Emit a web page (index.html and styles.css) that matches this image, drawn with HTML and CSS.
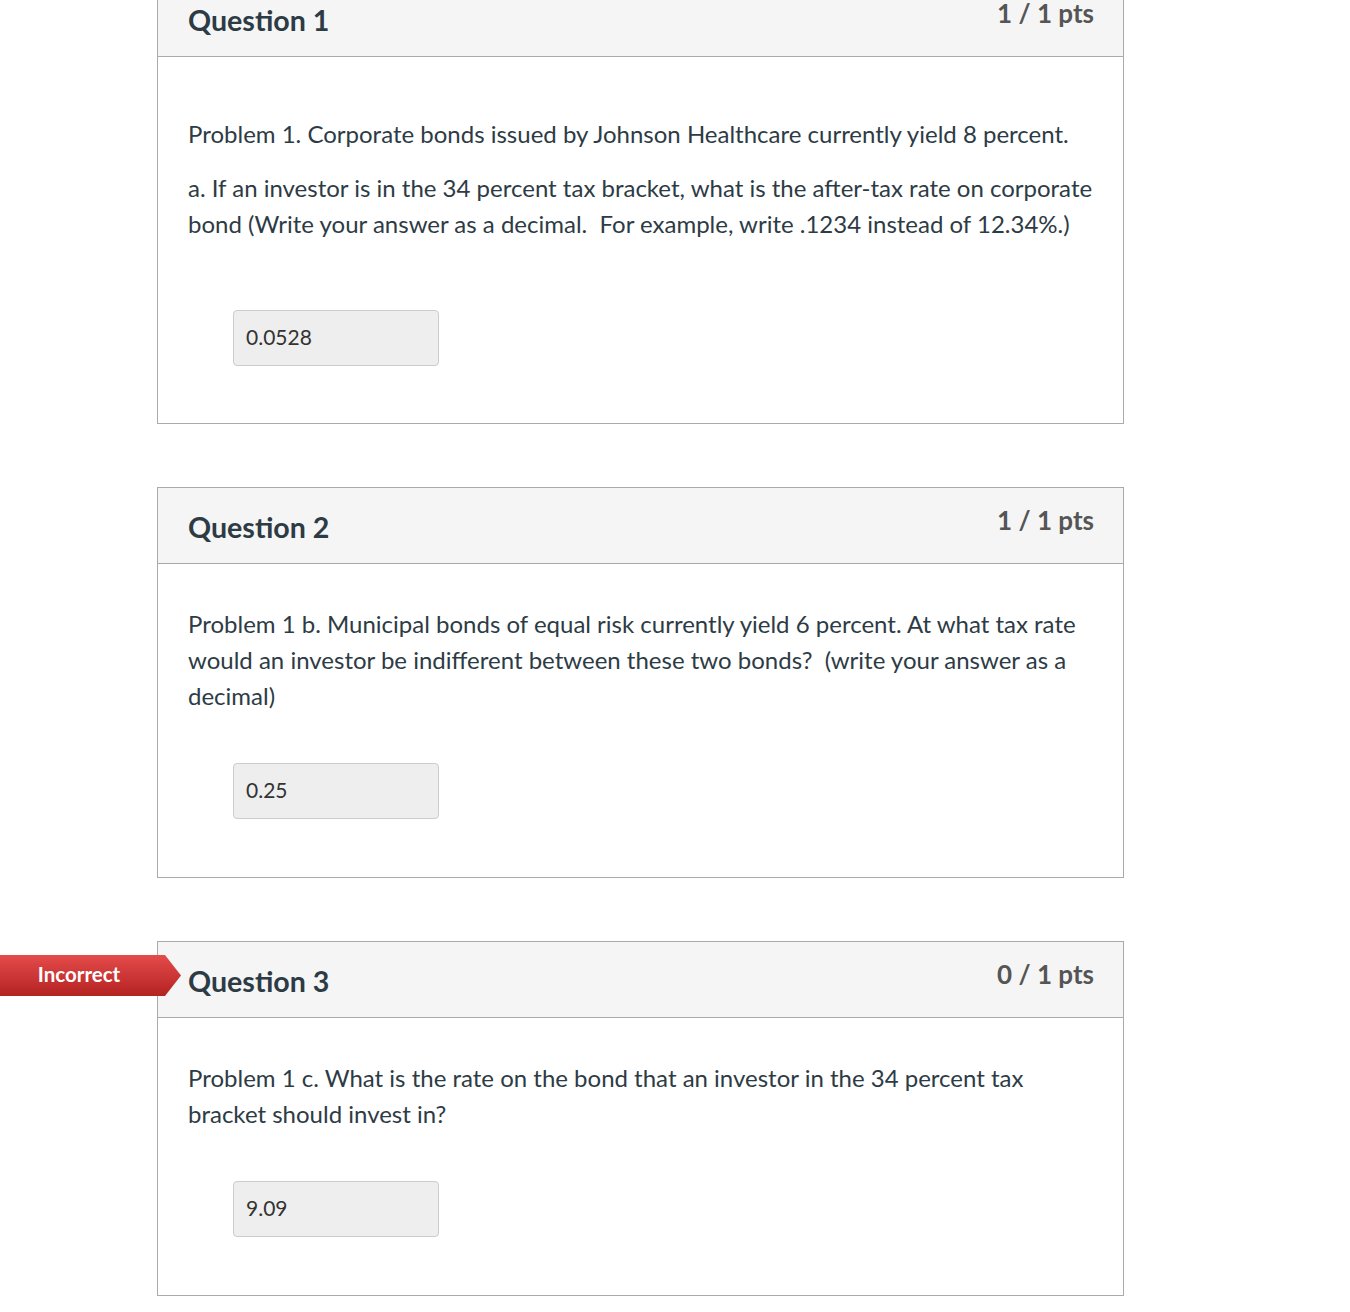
FILE: index.html
```html
<!DOCTYPE html>
<html>
<head>
<meta charset="utf-8">
<link rel="stylesheet" href="styles.css">
</head>
<body>
<div class="quiz">
  <div class="question first">
    <div class="q-header">
      <h2 class="q-title">Question 1</h2>
      <div class="q-points">1 / 1 pts</div>
    </div>
    <div class="q-body spaced">
      <p>Problem 1. Corporate bonds issued by Johnson Healthcare currently yield 8 percent.</p>
      <p>a. If an investor is in the 34 percent tax bracket, what is the after-tax rate on corporate bond (Write your answer as a decimal.&nbsp; For example, write .1234 instead of 12.34%.)</p>
      <div class="answer">0.0528</div>
    </div>
  </div>

  <div class="question">
    <div class="q-header">
      <h2 class="q-title">Question 2</h2>
      <div class="q-points">1 / 1 pts</div>
    </div>
    <div class="q-body">
      <p>Problem 1 b. Municipal bonds of equal risk currently yield 6 percent. At what tax rate would an investor be indifferent between these two bonds?&nbsp; (write your answer as a decimal)</p>
      <div class="answer">0.25</div>
    </div>
  </div>

  <div class="question">
    <div class="badge">Incorrect</div>
    <div class="q-header">
      <h2 class="q-title">Question 3</h2>
      <div class="q-points">0 / 1 pts</div>
    </div>
    <div class="q-body">
      <p>Problem 1 c. What is the rate on the bond that an investor in the 34 percent tax bracket should invest in?</p>
      <div class="answer">9.09</div>
    </div>
  </div>
</div>
</body>
</html>
```

FILE: styles.css
```css
html, body {
  margin: 0;
  padding: 0;
  background: #ffffff;
}

body {
  font-family: Lato, "Open Sans", "Liberation Sans", sans-serif;
  color: #2d3b45;
  overflow: hidden;
}

.quiz {
  padding-left: 157px;
  width: 967px;
  display: flex;
  flex-direction: column;
  gap: 63px;
}

.question {
  position: relative;
  width: 965px;
  border: 1px solid #aaaaaa;
  background: #ffffff;
}

.question.first {
  margin-top: -20px;
}

.q-header {
  height: 76px;
  box-sizing: border-box;
  background: #f5f5f5;
  border-bottom: 1px solid #aaaaaa;
  display: flex;
  justify-content: space-between;
  align-items: flex-start;
  padding: 0 29px 0 30px;
}

.q-title {
  margin: 25px 0 0 0;
  font-size: 28.6px;
  line-height: 28px;
  font-weight: 700;
  color: #2d3b45;
}

.q-points {
  margin-top: 19px;
  font-size: 26px;
  line-height: 26px;
  font-weight: 700;
  color: #555555;
}

.q-body {
  padding: 42px 30px 58px 30px;
}

.q-body p {
  margin: 0;
  font-size: 24px;
  line-height: 36px;
}

.q-body.spaced {
  padding-top: 59px;
  padding-bottom: 57px;
}

.q-body.spaced p + p {
  margin-top: 18px;
}

.answer {
  margin: 49px 0 0 45px;
  width: 204px;
  height: 54px;
  border: 1px solid #cccccc;
  border-radius: 4px;
  background: #eeeeee;
  font-size: 21px;
  line-height: 51px;
  text-indent: 12px;
  color: #333333;
}

.q-body.spaced .answer {
  margin-top: 68px;
}

.badge {
  position: absolute;
  left: -158px;
  top: 13px;
  width: 181px;
  height: 41px;
  box-sizing: border-box;
  padding-right: 23px;
  background: linear-gradient(#e54b4b, #b42222);
  clip-path: polygon(0 0, 165px 0, 181px 50%, 165px 100%, 0 100%);
  color: #ffffff;
  font-size: 20.5px;
  font-weight: 700;
  line-height: 38px;
  text-align: center;
  z-index: 2;
}
```
